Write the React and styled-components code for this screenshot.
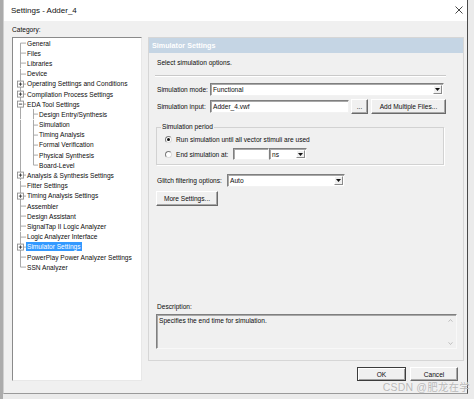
import React from 'react';
import styled, { createGlobalStyle } from 'styled-components';

const Global = createGlobalStyle`
  html, body { margin: 0; padding: 0; background: #ebebeb; }
  body { font-family: "Liberation Sans", Arial, sans-serif; }
  * { box-sizing: border-box; }
`;

const Page = styled.div`
  position: relative;
  width: 474px;
  height: 399px;
  overflow: hidden;
  background: #ebebeb;
  border-left: 3px solid #ababab;
`;

const Window = styled.div`
  width: 465px;
  height: 394px;
  display: flex;
  flex-direction: column;
  background: #f0f0f0;
  border-left: 1px solid #cfcfcf;
  border-right: 1px solid #4a4a4a;
  border-bottom: 1px solid #9a9a9a;
`;

const TitleBar = styled.div`
  height: 21px;
  flex: none;
  background: #ffffff;
  display: flex;
  align-items: center;
  justify-content: space-between;
  padding: 0 4px 1px 7px;
  font-size: 8px;
  color: #111;
`;

const Body = styled.div`
  flex: 1;
  display: flex;
  gap: 6px;
  padding: 4px 0 0 8px;
  font-size: 6.6px;
  color: #0c0c0c;
`;

const LeftCol = styled.div`
  width: 130px;
  display: flex;
  flex-direction: column;
`;

const SmallLabel = styled.div`
  height: ${p => p.h || 10}px;
  line-height: ${p => p.h || 10}px;
  margin-bottom: ${p => p.mb || 0}px;
  margin-top: ${p => p.mt || 0}px;
  white-space: nowrap;
`;

const TreeBox = styled.div`
  height: 344px;
  background: #fff;
  border: 1px solid;
  border-color: #8a8a8a #e8e8e8 #e8e8e8 #8a8a8a;
`;

const TreeRow = styled.div`
  height: 10.2px;
  display: flex;
  align-items: center;
  white-space: nowrap;
`;

const TreeLabel = styled.span`
  height: 9px;
  line-height: 9px;
  padding: 0 1px;
  background: ${p => (p.selected ? '#3399ff' : 'transparent')};
  color: ${p => (p.selected ? '#fff' : '#0c0c0c')};
`;

const RightCol = styled.div`
  width: 316px;
  margin-top: 12px;
  display: flex;
  flex-direction: column;
`;

const Panel = styled.div`
  height: 324px;
  border: 1px solid #d6d6d6;
  display: flex;
  flex-direction: column;
`;

const PanelHeader = styled.div`
  height: 15px;
  flex: none;
  background: #c5d5e4;
  color: #fff;
  font-weight: bold;
  font-size: 7.2px;
  display: flex;
  align-items: center;
  padding-left: 3px;
`;

const PanelContent = styled.div`
  flex: 1;
  display: flex;
  flex-direction: column;
  padding-left: 8px;
`;

const Separator = styled.div`
  margin: 7px 0 0 -2px;
  width: 291px;
  height: 2px;
  border-top: 1px solid #c9c9c9;
  border-bottom: 1px solid #fff;
`;

const Row = styled.div`
  display: flex;
  align-items: center;
  gap: ${p => p.gap || 0}px;
  margin-top: ${p => p.mt || 0}px;
  height: ${p => p.h || 13}px;
  white-space: nowrap;
`;

const RowLabel = styled.span`
  width: ${p => p.w}px;
  flex: none;
`;

const Field = styled.div`
  width: ${p => p.w}px;
  height: ${p => p.h || 13}px;
  flex: none;
  display: flex;
  align-items: center;
  background: #fff;
  border: 1px solid;
  border-color: #7f7f7f #f2f2f2 #f2f2f2 #7f7f7f;
  box-shadow: inset 1px 1px 0 #a8a8a8;
  padding-left: 2px;
`;

const FieldText = styled.span`
  flex: 1;
  line-height: 9px;
`;

const DropBtn = styled.span`
  width: 9px;
  height: calc(100% - 2px);
  margin-right: 1px;
  display: flex;
  align-items: center;
  justify-content: center;
  background: #f0f0f0;
  border: 1px solid;
  border-color: #fff #8a8a8a #8a8a8a #fff;
`;

const Button = styled.button`
  font: inherit;
  font-size: 6.6px;
  color: #0c0c0c;
  width: ${p => p.w}px;
  height: ${p => p.h || 14}px;
  flex: none;
  padding: 0;
  margin-left: ${p => p.ml || 0}px;
  margin-top: ${p => p.mt || 0}px;
  background: #f0f0f0;
  border: 1px solid;
  border-color: ${p => (p.primary ? '#3c3c3c' : '#fff #6a6a6a #6a6a6a #fff')};
  box-shadow: ${p => (p.primary ? 'inset 1px 1px 0 #fff, inset -1px -1px 0 #a0a0a0' : 'inset -1px -1px 0 #a8a8a8')};
  display: flex;
  align-items: center;
  justify-content: center;
  white-space: nowrap;
`;

const Group = styled.fieldset`
  margin: 9px 0 0 -1px;
  width: 288px;
  min-width: 0;
  padding: 3px 0 4px 8px;
  border: 1px solid #d2d2d2;
  box-shadow: 1px 1px 0 #fff;
  display: flex;
  flex-direction: column;
  gap: 4px;
`;

const Legend = styled.legend`
  height: 8px;
  line-height: 8px;
  padding: 0 1px;
  margin-left: -4px;
`;

const Radio = styled.span`
  width: 7px;
  height: 7px;
  flex: none;
  border-radius: 50%;
  background: #fff;
  border: 1px solid;
  border-color: #7a7a7a #dcdcdc #dcdcdc #7a7a7a;
  display: flex;
  align-items: center;
  justify-content: center;
  margin-right: 4px;
  &::after {
    content: '';
    width: 3px;
    height: 3px;
    border-radius: 50%;
    background: ${p => (p.checked ? '#111' : 'transparent')};
  }
`;

const Spacer = styled.div`
  flex: 1;
`;

const DescBox = styled.div`
  margin: 3px 0 11px -1px;
  width: 301px;
  height: 35px;
  display: flex;
  background: #f0f0f0;
  border: 1px solid;
  border-color: #7f7f7f #f8f8f8 #f8f8f8 #7f7f7f;
  box-shadow: inset 1px 1px 0 #a8a8a8;
`;

const DescText = styled.div`
  flex: 1;
  padding: 2px 0 0 2px;
  line-height: 8px;
`;

const ScrollCol = styled.div`
  width: 11px;
  display: flex;
  flex-direction: column;
  justify-content: space-between;
  align-items: center;
  padding: 4px 0 3px;
`;

const ButtonBar = styled.div`
  display: flex;
  justify-content: flex-end;
  gap: 4px;
  margin-top: 6px;
  padding-right: 6px;
`;

const Watermark = styled.div`
  position: absolute;
  right: 4px;
  bottom: 5px;
  font-family: "Liberation Sans", "Noto Sans CJK SC", sans-serif;
  font-size: 10.5px;
  color: #b9b9b9;
  letter-spacing: 0.2px;
  text-shadow: 0 0 1px rgba(255, 255, 255, 0.8);
`;

const Arrow = () => (
  <svg width="5" height="3" viewBox="0 0 5 3">
    <polygon points="0,0 5,0 2.5,3" fill="#111" />
  </svg>
);

const Select = ({ w, h, children }) => (
  <Field w={w} h={h}>
    <FieldText>{children}</FieldText>
    <DropBtn>
      <Arrow />
    </DropBtn>
  </Field>
);

const CloseIcon = () => (
  <svg width="8" height="8" viewBox="0 0 8 8">
    <path d="M0.5 0.5 L7.5 7.5 M7.5 0.5 L0.5 7.5" stroke="#333" strokeWidth="0.9" />
  </svg>
);

const Chevron = ({ up }) => (
  <svg width="5" height="3" viewBox="0 0 5 3">
    <path d={up ? 'M0.5 2.7 L2.5 0.5 L4.5 2.7' : 'M0.5 0.3 L2.5 2.5 L4.5 0.3'} stroke="#b4b4b4" strokeWidth="0.8" fill="none" />
  </svg>
);

const treeData = [
  { label: 'General' },
  { label: 'Files' },
  { label: 'Libraries' },
  { label: 'Device' },
  { label: 'Operating Settings and Conditions', box: '+' },
  { label: 'Compilation Process Settings', box: '+' },
  {
    label: 'EDA Tool Settings',
    box: '-',
    children: ['Design Entry/Synthesis', 'Simulation', 'Timing Analysis', 'Formal Verification', 'Physical Synthesis', 'Board-Level'],
  },
  { label: 'Analysis & Synthesis Settings', box: '+' },
  { label: 'Fitter Settings' },
  { label: 'Timing Analysis Settings', box: '+' },
  { label: 'Assembler' },
  { label: 'Design Assistant' },
  { label: 'SignalTap II Logic Analyzer' },
  { label: 'Logic Analyzer Interface' },
  { label: 'Simulator Settings', box: '+', selected: true },
  { label: 'PowerPlay Power Analyzer Settings' },
  { label: 'SSN Analyzer' },
];

const H = 10.2;
const LINE = '#a9a9a9';

const Connector = ({ depth, firstRoot, lastRoot, lastChild, box }) => {
  const w = 13 + 12 * depth;
  const mid = H / 2;
  return (
    <svg width={w} height={H} viewBox={`0 0 ${w} ${H}`} style={{ flex: 'none' }}>
      {depth === 0 ? (
        <>
          <line x1="7.5" y1={firstRoot ? mid : 0} x2="7.5" y2={lastRoot ? mid : H} stroke={LINE} strokeWidth="1" />
          <line x1="7.5" y1={mid} x2="13" y2={mid} stroke={LINE} strokeWidth="1" />
          {box && (
            <>
              <rect x="4.5" y={mid - 3} width="6" height="6" fill="#fff" stroke="#8f8f8f" strokeWidth="0.9" />
              <line x1="5.8" y1={mid} x2="9.2" y2={mid} stroke="#333" strokeWidth="0.9" />
              {box === '+' && <line x1="7.5" y1={mid - 1.7} x2="7.5" y2={mid + 1.7} stroke="#333" strokeWidth="0.9" />}
            </>
          )}
        </>
      ) : (
        <>
          <line x1="7.5" y1="0" x2="7.5" y2={H} stroke={LINE} strokeWidth="1" />
          <line x1="20.5" y1="0" x2="20.5" y2={lastChild ? mid : H} stroke={LINE} strokeWidth="1" />
          <line x1="20.5" y1={mid} x2="25" y2={mid} stroke={LINE} strokeWidth="1" />
        </>
      )}
    </svg>
  );
};

const Tree = () => {
  const rows = [];
  treeData.forEach((item, i) => {
    rows.push(
      <TreeRow key={item.label}>
        <Connector depth={0} firstRoot={i === 0} lastRoot={i === treeData.length - 1} box={item.box} />
        <TreeLabel selected={item.selected}>{item.label}</TreeLabel>
      </TreeRow>
    );
    if (item.children) {
      item.children.forEach((c, j) => {
        rows.push(
          <TreeRow key={c}>
            <Connector depth={1} lastChild={j === item.children.length - 1} />
            <TreeLabel>{c}</TreeLabel>
          </TreeRow>
        );
      });
    }
  });
  return <TreeBox>{rows}</TreeBox>;
};

export default function App() {
  return (
    <>
      <Global />
      <Page>
        <Window>
          <TitleBar>
            <span>Settings - Adder_4</span>
            <CloseIcon />
          </TitleBar>
          <Body>
            <LeftCol>
              <SmallLabel mb={2}>Category:</SmallLabel>
              <Tree />
            </LeftCol>
            <RightCol>
              <Panel>
                <PanelHeader>Simulator Settings</PanelHeader>
                <PanelContent>
                  <SmallLabel mt={5}>Select simulation options.</SmallLabel>
                  <Separator />
                  <Row mt={6}>
                    <RowLabel w={53}>Simulation mode:</RowLabel>
                    <Select w={234}>Functional</Select>
                  </Row>
                  <Row mt={3} h={15}>
                    <RowLabel w={53}>Simulation input:</RowLabel>
                    <Field w={139}>
                      <FieldText>Adder_4.vwf</FieldText>
                    </Field>
                    <Button w={17} h={15} ml={2}>...</Button>
                    <Button w={75} h={15} ml={3}>Add Multiple Files...</Button>
                  </Row>
                  <Group>
                    <Legend>Simulation period</Legend>
                    <Row h={10}>
                      <Radio checked />
                      <span>Run simulation until all vector stimuli are used</span>
                    </Row>
                    <Row h={12}>
                      <Radio />
                      <RowLabel w={57}>End simulation at:</RowLabel>
                      <Field w={36} h={12} />
                      <Select w={38} h={12}>ns</Select>
                    </Row>
                  </Group>
                  <Row mt={9}>
                    <RowLabel w={70}>Glitch filtering options:</RowLabel>
                    <Select w={118}>Auto</Select>
                  </Row>
                  <Button w={62} h={15} ml={-1} mt={4}>More Settings...</Button>
                  <Spacer />
                  <SmallLabel h={8}>Description:</SmallLabel>
                  <DescBox>
                    <DescText>Specifies the end time for simulation.</DescText>
                    <ScrollCol>
                      <Chevron up />
                      <Chevron />
                    </ScrollCol>
                  </DescBox>
                </PanelContent>
              </Panel>
              <ButtonBar>
                <Button w={49} primary>OK</Button>
                <Button w={48}>Cancel</Button>
              </ButtonBar>
            </RightCol>
          </Body>
        </Window>
        <Watermark>CSDN @肥龙在学</Watermark>
      </Page>
    </>
  );
}
